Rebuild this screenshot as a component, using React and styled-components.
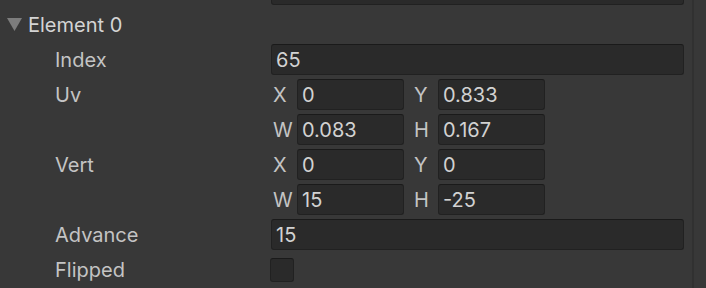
import React from "react";
import styled, { createGlobalStyle } from "styled-components";

const Global = createGlobalStyle`
  html, body {
    margin: 0;
    padding: 0;
    background: #383838;
    overflow: hidden;
  }
  body {
    font-family: Inter, "Noto Sans", sans-serif;
  }
`;

const Page = styled.div`
  display: flex;
  width: 706px;
  height: 288px;
  overflow: hidden;
  background: #383838;
`;

const Content = styled.div`
  flex: 1;
  display: flex;
  flex-direction: column;
  gap: 4px;
  margin-top: -26px;
`;

const Gutter = styled.div`
  width: 12px;
  margin-left: 8px;
  border-left: 2px solid #313131;
`;

const Row = styled.div`
  display: grid;
  grid-template-columns: 271px 1fr;
  align-items: center;
  height: 31px;
`;

const Label = styled.div`
  padding-left: ${(p) => p.$indent}px;
  color: #c4c4c4;
  font-size: 20px;
  display: flex;
  align-items: center;
  gap: 6px;
`;

const Foldout = styled.div`
  padding-left: 7px;
  color: #d4d4d4;
  font-size: 20px;
  display: flex;
  align-items: center;
  gap: 6px;
`;

const Field = styled.div`
  box-sizing: border-box;
  height: 31px;
  width: ${(p) => (p.$width ? `${p.$width}px` : "100%")};
  background: #2a2a2a;
  border: 1px solid #212121;
  border-top-color: #1a1a1a;
  border-radius: 3px;
  color: #d2d2d2;
  font-size: 20px;
  padding-left: 4px;
  display: flex;
  align-items: center;
`;

const Vector = styled.div`
  display: flex;
  gap: 8px;
`;

const Pair = styled.div`
  display: flex;
  align-items: center;
`;

const Axis = styled.span`
  width: 26px;
  padding-left: 2px;
  box-sizing: border-box;
  color: #c4c4c4;
  font-size: 20px;
`;

const Checkbox = styled.div`
  box-sizing: border-box;
  width: 24px;
  height: 24px;
  margin-left: -1px;
  background: #2a2a2a;
  border: 1px solid #212121;
  border-top-color: #1a1a1a;
  border-radius: 3px;
`;

const Triangle = () => (
  <svg width="15" height="13" viewBox="0 0 15 13">
    <polygon points="0,0 15,0 7.5,13" fill="#7d7d7d" />
  </svg>
);

const VectorRow = ({ label, a, b }) => (
  <Row>
    <Label $indent={55}>{label}</Label>
    <Vector>
      <Pair>
        <Axis>{a[0]}</Axis>
        <Field $width={107}>{a[1]}</Field>
      </Pair>
      <Pair>
        <Axis>{b[0]}</Axis>
        <Field $width={107}>{b[1]}</Field>
      </Pair>
    </Vector>
  </Row>
);

export default function App() {
  return (
    <Page>
      <Global />
      <Content>
        <Row>
          <Label $indent={55} />
          <Field />
        </Row>
        <Row>
          <Foldout>
            <Triangle />
            Element 0
          </Foldout>
        </Row>
        <Row>
          <Label $indent={55}>Index</Label>
          <Field>65</Field>
        </Row>
        <VectorRow label="Uv" a={["X", "0"]} b={["Y", "0.833"]} />
        <VectorRow label="" a={["W", "0.083"]} b={["H", "0.167"]} />
        <VectorRow label="Vert" a={["X", "0"]} b={["Y", "0"]} />
        <VectorRow label="" a={["W", "15"]} b={["H", "-25"]} />
        <Row>
          <Label $indent={55}>Advance</Label>
          <Field>15</Field>
        </Row>
        <Row>
          <Label $indent={55}>Flipped</Label>
          <Checkbox />
        </Row>
      </Content>
      <Gutter />
    </Page>
  );
}
